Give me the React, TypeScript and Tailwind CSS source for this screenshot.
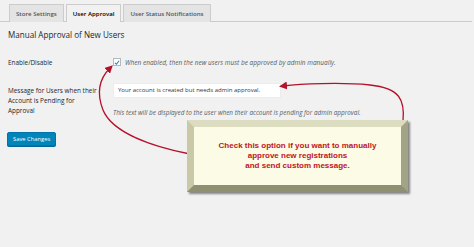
import React from "react";

const font = { fontFamily: '"Open Sans", "Liberation Sans", sans-serif' };

function Tabs() {
  const tabs = [
    { label: "Store Settings", active: false },
    { label: "User Approval", active: true },
    { label: "User Status Notifications", active: false },
  ];
  return (
    <div className="flex items-end gap-[2px] border-b border-[#cccccc] pl-[9px] pt-[4px] mr-[2px]">
      {tabs.map((t) => (
        <div
          key={t.label}
          className={
            "h-[18px] px-[6px] flex items-center text-[6.1px] font-semibold border border-b-0 -mb-px " +
            (t.active
              ? "bg-[#f1f1f1] border-[#cccccc] text-[#000000] border-b border-b-[#f1f1f1]"
              : "bg-[#e4e4e4] border-[#cccccc] text-[#555555]")
          }
        >
          {t.label}
        </div>
      ))}
    </div>
  );
}

function Check() {
  return (
    <span className="w-[8px] h-[8px] border border-[#b4b9be] bg-white flex items-center justify-center shrink-0">
      <svg width="7" height="7" viewBox="0 0 10 10">
        <path d="M1.5 5.5 L4 8 L8.5 2" fill="none" stroke="#1e8cbe" strokeWidth="1.8" />
      </svg>
    </span>
  );
}

function Arrows() {
  return (
    <svg className="absolute inset-0 pointer-events-none" width="474" height="247" viewBox="0 0 474 247">
      <defs>
        <marker id="ah" markerWidth="8" markerHeight="8" refX="4" refY="4" orient="auto" markerUnits="userSpaceOnUse">
          <path d="M0 0 L8 4 L0 8 Z" fill="#b3122b" />
        </marker>
      </defs>
      <path
        d="M403 121 C405 100 400 88 370 85 C340 82 300 84 283 86"
        fill="none"
        stroke="#b3122b"
        strokeWidth="1.3"
        markerEnd="url(#ah)"
      />
      <path
        d="M190 154 C150 146 112 132 103 110 C96 92 100 78 110 68"
        fill="none"
        stroke="#b3122b"
        strokeWidth="1.3"
        markerEnd="url(#ah)"
      />
    </svg>
  );
}

function Callout() {
  return (
    <div className="absolute left-[187px] top-[120px] w-[221px] h-[72px] shadow-[2px_2px_2px_rgba(0,0,0,0.45)]">
      <div className="w-full h-full border-[7px] border-t-[#dcdcc0] border-l-[#c9c9a8] border-r-[#a3a385] border-b-[#8f8f72] bg-[#fbfbe6] flex flex-col items-center justify-center">
        <p
          className="text-[8px] font-bold leading-[10px] text-[#c0141c] text-center"
          style={{ fontFamily: '"Liberation Sans", Arial, sans-serif' }}
        >
          Check this option if you want to manually
          <br />
          approve new registrations
          <br />
          and send custom message.
        </p>
      </div>
    </div>
  );
}

export default function App() {
  return (
    <div className="relative w-[474px] h-[247px] bg-[#f1f1f1] overflow-hidden" style={font}>
      <Tabs />
      <div className="px-[8px]">
        <h2 className="text-[8.1px] font-normal text-[#23282d] mt-[7px]">Manual Approval of New Users</h2>

        <div className="grid grid-cols-[105px_1fr] gap-y-[15px] mt-[16px] text-[6.4px] text-[#23282d]">
          <div className="font-medium pt-[1px]">Enable/Disable</div>
          <label className="flex items-center gap-[4px] italic text-[#555d66] text-[6.5px]">
            <Check />
            When enabled, then the new users must be approved by admin manually.
          </label>

          <div className="font-medium leading-[10px] pt-[3px]">
            Message for Users when their
            <br />
            Account is Pending for
            <br />
            Approval
          </div>
          <div className="flex flex-col gap-[10px]">
            <div className="w-[168px] h-[15px] bg-white border border-[#ececec] flex items-center px-[4px] text-[6px] text-[#32373c] whitespace-nowrap">
              Your account is created but needs admin approval.
            </div>
            <div className="italic text-[#555d66] text-[6.4px]">
              This text will be displayed to the user when their account is pending for admin approval.
            </div>
          </div>
        </div>

        <button className="mt-[15px] -ml-[1px] h-[14px] px-[5px] bg-[#0085ba] border border-[#0073aa] rounded-[2px] text-white text-[5.8px] flex items-center shadow-[0_1px_0_#006799]">
          Save Changes
        </button>
      </div>
      <Arrows />
      <Callout />
    </div>
  );
}
